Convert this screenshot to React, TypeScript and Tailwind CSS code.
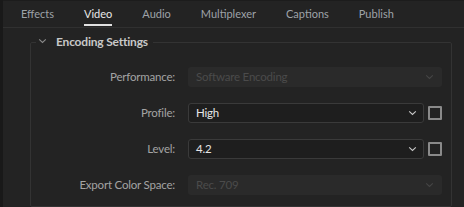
import React from "react";

const Chevron = ({ className }: { className?: string }) => (
  <svg width="9" height="6" viewBox="0 0 9 6" className={className} fill="none">
    <path d="M1.2 1.4 L4.5 4.5 L7.8 1.4" stroke="currentColor" strokeWidth="1.1" />
  </svg>
);

const tabs = ["Effects", "Video", "Audio", "Multiplexer", "Captions", "Publish"];

function SelectBox({ value, disabled, checkbox }: { value: string; disabled?: boolean; checkbox?: boolean }) {
  return (
    <div className="flex items-center gap-[4px] w-[254px]">
      {disabled ? (
        <div className="flex-1 h-[20px] rounded-[3px] bg-[#2a2a2a] flex items-center justify-between pl-[8px] pr-[8px] text-[#4b4b4b]">
          <span>{value}</span>
          <Chevron className="text-[#454545]" />
        </div>
      ) : (
        <div className="flex-1 h-[20px] rounded-[3px] bg-[#1e1e1e] border border-[#3a3a3a] flex items-center justify-between pl-[7px] pr-[6px] text-[#e6e6e6]">
          <span>{value}</span>
          <Chevron className="text-[#c8c8c8]" />
        </div>
      )}
      {checkbox && <div className="w-[14px] h-[14px] border-2 border-[#8a8a8a] rounded-[1px]" />}
    </div>
  );
}

const rows = [
  { label: "Performance:", value: "Software Encoding", disabled: true },
  { label: "Profile:", value: "High", checkbox: true },
  { label: "Level:", value: "4.2", checkbox: true },
  { label: "Export Color Space:", value: "Rec. 709", disabled: true },
];

export default function App() {
  return (
    <div
      className="w-[464px] h-[207px] bg-[#232323] flex overflow-hidden text-[11.5px] tracking-[-0.2px]"
      style={{ fontFamily: "Lato, 'Open Sans', sans-serif" }}
    >
      <div className="w-[3px] bg-[#191919] shrink-0" />
      <div className="flex-1 flex flex-col border-t border-[#1c1c1c]">
        <div className="h-[27px] border-b border-[#303030] flex items-start pl-[18px] gap-[30px] text-[11px] tracking-[0px]">
          {tabs.map((t) => (
            <div
              key={t}
              className={
                t === "Video"
                  ? "h-[25px] flex items-center pt-[4px] text-[#e8e8e8] border-b-2 border-[#e0e0e0]"
                  : "h-[25px] flex items-center pt-[2px] text-[#9ea2a8]"
              }
            >
              {t}
            </div>
          ))}
        </div>
        <fieldset className="mt-[5px] ml-[27px] mr-[12px] border border-[#333333] rounded-[2px] px-0 pt-[16px] pb-0 min-w-0 flex-1">
          <legend className="ml-[5px] px-[1px] h-[18px]">
            <div className="flex items-center h-[18px]">
              <Chevron className="text-[#8a8a8a] mx-[1px] -mt-[3px]" />
              <span className="ml-[8px] mr-[4px] text-[12px] tracking-[-0.2px] font-bold text-[#c8c8c8]">Encoding Settings</span>
            </div>
          </legend>
          <div className="flex flex-col gap-[16px]">
            {rows.map((r) => (
              <div key={r.label} className="flex items-center h-[20px]">
                <div className="w-[144px] text-right text-[#a3a3a3]">{r.label}</div>
                <div className="ml-[13px]">
                  <SelectBox value={r.value} disabled={r.disabled} checkbox={r.checkbox} />
                </div>
              </div>
            ))}
          </div>
        </fieldset>
      </div>
    </div>
  );
}
